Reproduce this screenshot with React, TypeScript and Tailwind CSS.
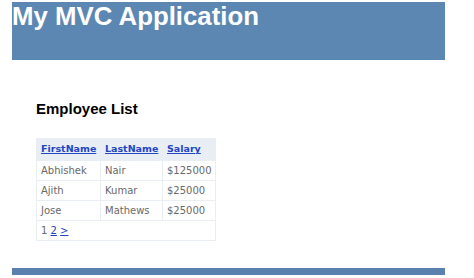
const employees = [
  { first: "Abhishek", last: "Nair", salary: "$125000" },
  { first: "Ajith", last: "Kumar", salary: "$25000" },
  { first: "Jose", last: "Mathews", salary: "$25000" },
]

export default function App() {
  return (
    <div className="min-h-[278px] bg-white pt-[2px] font-['Liberation_Sans',Arial,sans-serif]">
      <div className="ml-[12px] w-[433px]">
        {/* header */}
        <div className="h-[58px] bg-[#5c87b2]">
          <h1 className="pt-[2px] text-[25.8px] font-bold leading-none text-white">My MVC Application</h1>
        </div>

        {/* main */}
        <div className="h-[208px] pl-[24px] pt-[40px]">
          <h2 className="text-[15px] font-bold leading-[18px] text-black">Employee List</h2>
          <table className="mt-[20px] w-[179px] table-fixed border-collapse border border-[#e8eef4] font-['DejaVu_Sans',Verdana,sans-serif] text-[10px] text-[#696969]">
            <colgroup>
              <col className="w-[64px]" />
              <col className="w-[62px]" />
              <col className="w-[53px]" />
            </colgroup>
            <thead>
              <tr className="h-[22px] bg-[#e8eef4]">
                <th className="border border-[#e8eef4] px-[4px] text-left text-[9.5px] font-bold">
                  <a href="#" className="text-[#2245c4] underline">FirstName</a>
                </th>
                <th className="border border-[#e8eef4] px-[4px] text-left text-[9.5px] font-bold">
                  <a href="#" className="text-[#2245c4] underline">LastName</a>
                </th>
                <th className="border border-[#e8eef4] px-[4px] text-left text-[9.5px] font-bold">
                  <a href="#" className="text-[#2245c4] underline">Salary</a>
                </th>
              </tr>
            </thead>
            <tbody>
              {employees.map((e, i) => (
                <tr key={i} className="h-[20px]">
                  <td className="border border-[#e8eef4] px-[4px] whitespace-nowrap">{e.first}</td>
                  <td className="border border-[#e8eef4] px-[4px] whitespace-nowrap">{e.last}</td>
                  <td className="border border-[#e8eef4] px-[4px] whitespace-nowrap">{e.salary}</td>
                </tr>
              ))}
              <tr className="h-[20px]">
                <td colSpan={3} className="border border-[#e8eef4] px-[4px]">
                  1 <a href="#" className="text-[#2245c4] underline">2</a>{" "}
                  <a href="#" className="text-[#2245c4] underline">&gt;</a>
                </td>
              </tr>
            </tbody>
          </table>
        </div>

        {/* footer */}
        <div className="h-[7px] bg-[#5a80ad]" />
      </div>
    </div>
  )
}
